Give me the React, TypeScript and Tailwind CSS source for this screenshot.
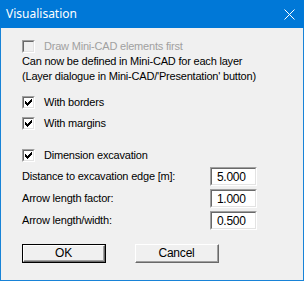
import React from 'react';

const Check = () => (
  <svg width="7" height="7" viewBox="0 0 7 7" shapeRendering="crispEdges">
    <polygon points="0,2 2,4 6,0 7,0 7,3 2,7 0,5" fill="#000" />
  </svg>
);

const CheckBox = ({ checked, disabled }: { checked?: boolean; disabled?: boolean }) => (
  <div className="w-[13px] h-[13px] border-t border-l border-t-[#a0a0a0] border-l-[#a0a0a0] border-b border-r border-b-white border-r-white">
    <div className="w-full h-full border-t border-l border-t-[#696969] border-l-[#696969] border-b border-r border-b-[#e3e3e3] border-r-[#e3e3e3]">
      <div className={`w-full h-full flex items-center justify-center ${disabled ? 'bg-[#f0f0f0]' : 'bg-white'}`}>
        {checked && <Check />}
      </div>
    </div>
  </div>
);

const CheckRow = ({ label, checked, disabled }: { label: string; checked?: boolean; disabled?: boolean }) => (
  <div className="flex items-center h-4">
    <CheckBox checked={checked} disabled={disabled} />
    <span className={`ml-[9px] ${disabled ? 'text-[#a0a0a0]' : 'text-black'}`}>{label}</span>
  </div>
);

const NumField = ({ value }: { value: string }) => (
  <div className="w-[47px] h-[19px] border-t border-l border-t-[#a0a0a0] border-l-[#a0a0a0] border-b border-r border-b-white border-r-white">
    <div className="w-full h-full border-t border-l border-t-[#696969] border-l-[#696969] border-b border-r border-b-[#e3e3e3] border-r-[#e3e3e3] bg-white flex items-center pl-[5px] text-[12px] tracking-[-0.3px]">
      {value}
    </div>
  </div>
);

const FieldRow = ({ label, value, className }: { label: string; value: string; className?: string }) => (
  <div className={`flex items-center justify-between w-[235px] ${className ?? ''}`}>
    <span>{label}</span>
    <NumField value={value} />
  </div>
);

const Btn = ({ label, isDefault }: { label: string; isDefault?: boolean }) => (
  <div className={`w-[84px] h-[19px] ${isDefault ? 'border border-black' : ''}`}>
    <div className="w-full h-full border-t border-l border-t-white border-l-white border-b border-r border-b-[#696969] border-r-[#696969]">
      <div className="w-full h-full border-b border-r border-b-[#a0a0a0] border-r-[#a0a0a0] bg-[#f0f0f0] flex items-center justify-center text-[12px]">
        {label}
      </div>
    </div>
  </div>
);

export default function App() {
  return (
    <div className="w-[305px] h-[282px] bg-white">
      <div className="w-[304px] h-[281px] bg-[#f0f0f0] border-x border-b border-[#1883d7] flex flex-col font-['Liberation_Sans',Arial,sans-serif] text-[11px] tracking-[-0.2px] text-black leading-none">
        {/* Title bar */}
        <div className="h-[28px] -mx-px bg-[#0078d7] flex items-center justify-between pl-[6px] pr-[9px] shrink-0 tracking-normal">
          <span className="text-white text-[12px] font-['Noto_Sans',sans-serif]">Visualisation</span>
          <svg width="11" height="11" viewBox="0 0 11 11">
            <path d="M0.5 0.5 L10.5 10.5 M10.5 0.5 L0.5 10.5" stroke="#fff" strokeWidth="1" />
          </svg>
        </div>

        <div className="flex flex-col pl-[21px]">
          <div className="mt-[10px]">
            <CheckRow label="Draw Mini-CAD elements first" disabled />
          </div>
          <div className="h-[15px] flex items-center">Can now be defined in Mini-CAD for each layer</div>
          <div className="h-[15px] flex items-center">(Layer dialogue in Mini-CAD/'Presentation' button)</div>

          <div className="mt-[10px]">
            <CheckRow label="With borders" checked />
          </div>
          <div className="mt-[5px]">
            <CheckRow label="With margins" checked />
          </div>

          <div className="mt-[16px]">
            <CheckRow label="Dimension excavation" checked />
          </div>
          <FieldRow className="mt-[4px]" label="Distance to excavation edge [m]:" value="5.000" />
          <FieldRow className="mt-[3px]" label="Arrow length factor:" value="1.000" />
          <FieldRow className="mt-[3px]" label="Arrow length/width:" value="0.500" />

          <div className="mt-[14px] flex gap-[29px]">
            <Btn label="OK" isDefault />
            <Btn label="Cancel" />
          </div>
        </div>
      </div>
    </div>
  );
}
